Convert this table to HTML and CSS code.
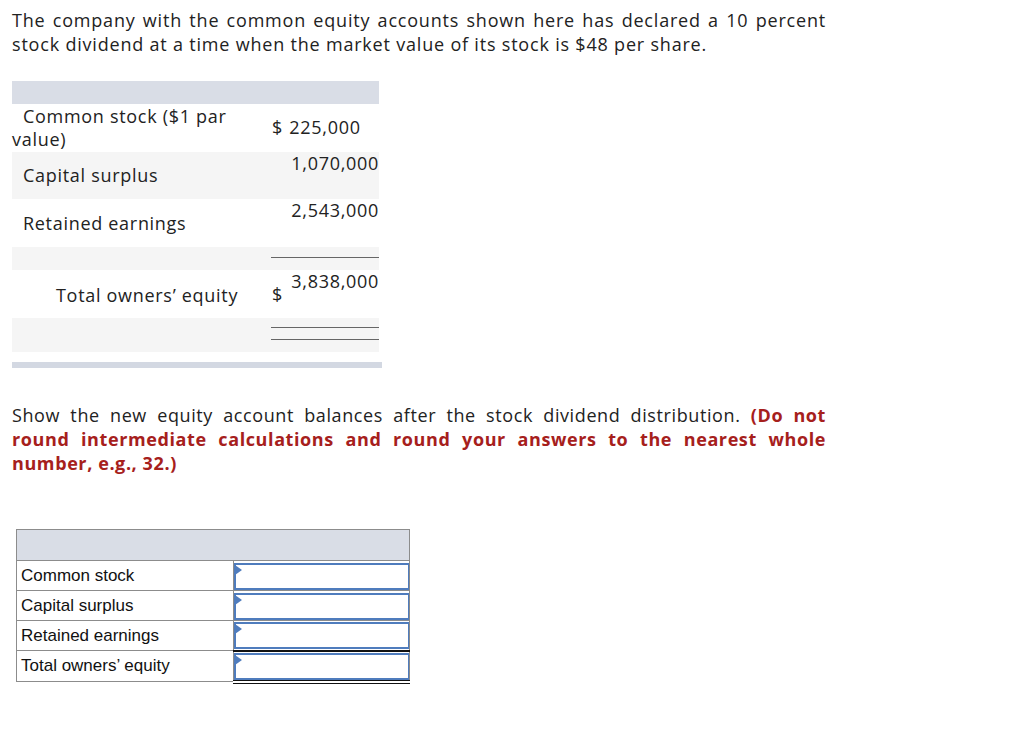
FILE: index.html
```html
<!DOCTYPE html>
<html>
<head>
<meta charset="utf-8">
<link rel="stylesheet" href="styles.css">
</head>
<body>
<div class="page">
  <p class="intro">The company with the common equity accounts shown here has declared a 10 percent stock dividend at a time when the market value of its stock is $48 per share.</p>

  <div class="given">
    <div class="g-head"></div>
    <div class="g-row r1">
      <div class="g-label wrap">Common stock ($1 par value)</div>
      <div class="g-val mid">$ 225,000</div>
    </div>
    <div class="g-row r2 shade">
      <div class="g-label">Capital surplus</div>
      <div class="g-val top">1,070,000</div>
    </div>
    <div class="g-row r3">
      <div class="g-label">Retained earnings</div>
      <div class="g-val top">2,543,000</div>
    </div>
    <div class="g-row r4 shade">
      <div class="g-label"></div>
      <div class="g-val"><div class="rule single"></div></div>
    </div>
    <div class="g-row r5">
      <div class="g-label total">Total owners’ equity</div>
      <div class="g-val tot"><span class="dol">$</span><span class="sup">3,838,000</span></div>
    </div>
    <div class="g-row r6 shade">
      <div class="g-label"></div>
      <div class="g-val"><div class="rule double"></div></div>
    </div>
    <div class="g-foot"></div>
  </div>

  <p class="ask">Show the new equity account balances after the stock dividend distribution. <b class="hint">(Do not round intermediate calculations and round your answers to the nearest whole number, e.g., 32.)</b></p>

  <table class="answer">
    <tr class="a-head"><td colspan="2"></td></tr>
    <tr><td class="a-label">Common stock</td><td class="a-cell"><div class="inp"><span class="flag"></span></div></td></tr>
    <tr><td class="a-label">Capital surplus</td><td class="a-cell"><div class="inp"><span class="flag"></span></div></td></tr>
    <tr><td class="a-label">Retained earnings</td><td class="a-cell sub"><div class="inp"><span class="flag"></span></div></td></tr>
    <tr><td class="a-label">Total owners’ equity</td><td class="a-cell dbl"><div class="inp"><span class="flag"></span></div></td></tr>
  </table>
</div>
</body>
</html>
```

FILE: styles.css
```css
html, body {
  margin: 0;
  padding: 0;
  background: #fff;
}
.page {
  padding: 8px 12px;
  width: 814px;
  font-family: "Open Sans", sans-serif;
  color: #222;
  font-size: 18px;
  letter-spacing: 0.6px;
}
.intro {
  margin: 0;
  line-height: 24px;
  text-align: justify;
  letter-spacing: 0.8px;
}
.given {
  margin-top: 25px;
  width: 367px;
  letter-spacing: 0.7px;
}
.g-head {
  height: 23px;
  background: #d9dde6;
}
.g-row {
  display: flex;
}
.g-row.shade { background: #f5f5f5; }
.r1 { height: 48px; }
.r2 { height: 47px; }
.r3 { height: 48px; }
.r4 { height: 23px; }
.r5 { height: 48px; }
.r6 { height: 34px; }
.g-label {
  width: 259px;
  padding-left: 11px;
  box-sizing: border-box;
  display: flex;
  align-items: center;
  line-height: 23px;
}
.g-label.wrap {
  display: block;
  padding-left: 0;
  padding-right: 28px;
  text-indent: 11px;
  padding-top: 1px;
}
.g-label.total {
  padding-left: 44px;
  padding-top: 2px;
}
.g-val {
  flex: 1;
  text-align: right;
  line-height: 22px;
}
.g-val.mid {
  padding-top: 12px;
  padding-right: 11px;
  text-align: left;
  padding-left: 1px;
  word-spacing: 1px;
}
.g-val.top { padding-top: 0; }
.g-val.tot {
  display: flex;
  justify-content: space-between;
  padding-top: 0;
}
.dol { padding-top: 13px; padding-left: 1px; }
.sup { padding-top: 0; }
.rule.single {
  margin-top: 10px;
  border-top: 1px solid #666;
}
.rule.double {
  margin-top: 9px;
  height: 11px;
  border-top: 1px solid #666;
  border-bottom: 1px solid #666;
}
.g-foot {
  margin-top: 10px;
  height: 6px;
  width: 370px;
  background: #d3d8e2;
}
.ask {
  margin: 35px 0 0;
  line-height: 24px;
  text-align: justify;
}
.hint {
  color: #a6201c;
  font-weight: bold;
}
.answer {
  margin-top: 54px;
  margin-left: 4px;
  border-collapse: collapse;
  font-family: "Liberation Sans", Arial, sans-serif;
  font-size: 17px;
  letter-spacing: 0;
  color: #111;
}
.answer td {
  border: 1px solid #8c8c8c;
  padding: 0;
}
.a-head td {
  height: 30px;
  background: #d9dde6;
}
.a-label {
  width: 212px;
  height: 29px;
  padding-left: 4px !important;
}
.a-cell {
  width: 175px;
  position: relative;
}
.inp {
  height: 23px;
  margin: 1px 0 0;
  border: 2px solid #4f7cbd;
  border-right: 1px solid #4f7cbd;
  position: relative;
  background: #fff;
}
.flag {
  position: absolute;
  left: -1px;
  top: 0;
  width: 0;
  height: 0;
  border-top: 5px solid transparent;
  border-bottom: 5px solid transparent;
  border-left: 7px solid #4f7cbd;
}
.a-cell.sub { border-bottom: 2px solid #111; }
.a-cell.dbl { border-bottom: 4px double #111; }
```
